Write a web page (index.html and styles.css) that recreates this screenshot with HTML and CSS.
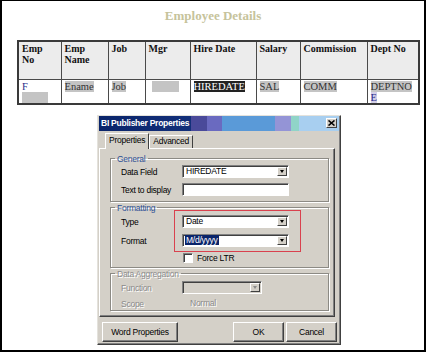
FILE: index.html
```html
<!DOCTYPE html>
<html lang="en">
<head>
  <meta charset="UTF-8" />
  <title>Employee Details</title>
  <link rel="stylesheet" href="styles.css">
</head>
<body>
  <div class="frame">
    <h1 class="title">Employee Details</h1>

    <table class="emp">
      <colgroup>
        <col class="w43"><col class="w47"><col class="w37"><col class="w45">
        <col class="w66"><col class="w44"><col class="w67"><col class="w52">
      </colgroup>
      <tr>
        <th>Emp<br>No</th>
        <th>Emp<br>Name</th>
        <th>Job</th>
        <th>Mgr</th>
        <th>Hire Date</th>
        <th>Salary</th>
        <th>Commission</th>
        <th>Dept No</th>
      </tr>
      <tr>
        <td><span class="fld-blue">F</span><br><span class="blk blk-empno"></span></td>
        <td><span class="fld">Ename</span></td>
        <td><span class="fld">Job</span></td>
        <td><span class="blk blk-mgr"></span></td>
        <td><span class="fld-dark">HIREDATE</span></td>
        <td><span class="fld">SAL</span></td>
        <td><span class="fld">COMM</span></td>
        <td><span class="fld">DEPTNO</span><br><span class="fld-end">E</span></td>
      </tr>
    </table>

    <div class="dlg">
      <div class="titlebar">
        <span>BI Publisher Properties</span>
        <span class="close">
          <svg width="7" height="6" viewBox="0 0 7 6"><path d="M0.5 0.5 L6.5 5.5 M6.5 0.5 L0.5 5.5" stroke="#000" stroke-width="1.6" fill="none"/></svg>
        </span>
      </div>

      <div class="tabs">
        <div class="tab active">Properties</div>
        <div class="tab">Advanced</div>
      </div>

      <div class="panel">
        <fieldset class="group">
          <legend>General</legend>
          <div class="rows">
            <div class="row">
              <label>Data Field</label>
              <div class="select"><span>HIREDATE</span><span class="arrow"></span></div>
            </div>
            <div class="row">
              <label>Text to display</label>
              <div class="input"></div>
            </div>
          </div>
        </fieldset>

        <fieldset class="group group-fmt">
          <legend>Formatting</legend>
          <div class="rows">
            <div class="mark"></div>
            <div class="row">
              <label>Type</label>
              <div class="select"><span>Date</span><span class="arrow"></span></div>
            </div>
            <div class="row">
              <label>Format</label>
              <div class="select"><span class="sel">M/d/yyyy</span><span class="arrow"></span></div>
            </div>
            <div class="row row-check">
              <span></span>
              <div class="check"><span class="box"></span>Force LTR</div>
            </div>
          </div>
        </fieldset>

        <fieldset class="group disabled">
          <legend>Data Aggregation</legend>
          <div class="rows">
            <div class="row">
              <label>Function</label>
              <div class="select select-off"><span></span><span class="arrow"></span></div>
            </div>
            <div class="row row-text">
              <label>Scope</label>
              <span class="value">Normal</span>
            </div>
          </div>
        </fieldset>
      </div>

      <div class="buttons">
        <button class="btn btn-word">Word Properties</button>
        <button class="btn btn-ok">OK</button>
        <button class="btn btn-cancel">Cancel</button>
      </div>
    </div>
  </div>
</body>
</html>
```

FILE: styles.css
```css
* {
  box-sizing: border-box;
}

body {
  margin: 0;
  background: #fff;
}

.frame {
  width: 426px;
  height: 352px;
  border: 2px solid #000;
  border-top-width: 1px;
  background: #fff;
  overflow: hidden;
}

.title {
  margin: 0;
  padding-top: 7px;
  font: bold 13px/15px "Liberation Serif", serif;
  color: #c6c39b;
  text-align: center;
}

/* tabela do relatorio */
.emp {
  margin: 17px 0 0 15px;
  width: 401px;
  border-collapse: collapse;
  table-layout: fixed;
  border: 2px solid #3a3a3a;
  font-family: "Liberation Serif", serif;
  color: #111;
}

.w43 { width: 43px; }
.w47 { width: 47px; }
.w37 { width: 37px; }
.w45 { width: 45px; }
.w66 { width: 66px; }
.w44 { width: 44px; }
.w67 { width: 67px; }
.w52 { width: 52px; }

.emp th,
.emp td {
  border: 1px solid #4a4a4a;
  text-align: left;
  vertical-align: top;
  padding: 1px 3px 0;
  overflow: hidden;
}

.emp th {
  height: 38px;
  background: #ececec;
  font-size: 10px;
  line-height: 11px;
  font-weight: bold;
}

.emp td {
  height: 22px;
  padding-top: 1px;
  font-size: 10.5px;
  line-height: 11px;
  white-space: nowrap;
}

.fld {
  background: #c4c4c4;
  color: #333;
}

.fld-blue {
  color: #2a2a8a;
}

.fld-end {
  background: #d4d0e8;
  color: #2a2a8a;
}

.fld-dark {
  background: #222;
  color: #fff;
}

.blk {
  display: inline-block;
  background: #c4c4c4;
  vertical-align: top;
}

.blk-empno {
  width: 26px;
  height: 11px;
}

.blk-mgr {
  width: 27px;
  height: 11px;
  margin-left: 3px;
}

/* janela de propriedades */
.dlg {
  width: 244px;
  margin: 10px 0 0 95px;
  padding: 0 1px 2px;
  background: #d4d0c8;
  border: 1px solid;
  border-color: #e4e2dc #404040 #404040 #e4e2dc;
  box-shadow: inset -1px -1px #808080;
  font: 8.5px/10px "Liberation Sans", sans-serif;
  letter-spacing: -0.25px;
  color: #000;
}

.titlebar {
  display: flex;
  align-items: center;
  height: 15px;
  padding-left: 2px;
  font-weight: bold;
  color: #fff;
  background: linear-gradient(90deg,
    #0a246a 0, #13307a 92px,
    #4a4a9a 92px, #4a4a9a 108px,
    #6a6ac0 108px, #6a6ac0 123px,
    #5a9ad8 123px, #5a9ad8 176px,
    #9494d6 176px, #9494d6 192px,
    #90d4c8 192px, #90d4c8 200px,
    #a8cff0 200px);
}

.close {
  display: flex;
  align-items: center;
  justify-content: center;
  width: 11px;
  height: 10px;
  margin: 0 2px 0 auto;
  background: #d4d0c8;
  border: 1px solid;
  border-color: #fff #404040 #404040 #fff;
}

.tabs {
  display: flex;
  align-items: flex-end;
  height: 15px;
  margin-top: 2px;
  padding-left: 6px;
  position: relative;
  z-index: 1;
}

.tab {
  height: 13px;
  padding: 0 3px;
  border: 1px solid;
  border-color: #fff #404040 transparent #fff;
  border-bottom: none;
  line-height: 11px;
  background: #d4d0c8;
  white-space: nowrap;
}

.tab.active {
  height: 16px;
  margin-bottom: -1px;
  line-height: 12px;
}

.panel {
  height: 169px;
  margin-right: 4px;
  padding-top: 5px;
  border: 1px solid;
  border-color: #fff #404040 #404040 #fff;
  box-shadow: inset -1px -1px #808080;
}

.group {
  margin: 0 5px 0 10px;
  padding: 0 0 5px 10px;
  border: 1px solid #8c8a84;
  box-shadow: inset 1px 1px #fff, 1px 1px #fff;
  min-width: 0;
}

.group + .group {
  margin-top: 1px;
}

.group legend {
  margin-left: -6px;
  padding: 0 2px;
  color: #2c4f94;
}

.rows {
  position: relative;
  display: flex;
  flex-direction: column;
  gap: 5px;
  padding-top: 1px;
}

.row {
  display: grid;
  grid-template-columns: 61px auto;
  align-items: center;
  height: 13px;
}

.row label {
  padding-top: 1px;
}

.select,
.input {
  display: flex;
  align-items: center;
  width: 107px;
  height: 13px;
  background: #fff;
  border: 1px solid;
  border-color: #808080 #fff #fff #808080;
  box-shadow: inset 1px 1px #404040;
}

.select span:first-child {
  flex: 1;
  padding-left: 3px;
}

.select span.sel {
  flex: none;
  margin-left: 2px;
  padding: 0 1px;
  background: #0a246a;
  color: #fff;
}

.select .sel + .arrow {
  margin-left: auto;
}

.arrow {
  position: relative;
  width: 10px;
  height: 9px;
  margin-right: 1px;
  background: #d4d0c8;
  border: 1px solid;
  border-color: #fff #404040 #404040 #fff;
}

.arrow::after {
  content: "";
  position: absolute;
  left: 2px;
  top: 2px;
  border-left: 2.5px solid transparent;
  border-right: 2.5px solid transparent;
  border-top: 3px solid #000;
}

/* marcacao vermelha sobre Type/Format */
.mark {
  position: absolute;
  left: 53px;
  top: -3px;
  width: 127px;
  height: 42px;
  border: 1px solid #d9414e;
  pointer-events: none;
}

.group-fmt {
  padding-bottom: 4px;
}

.group-fmt .rows {
  padding-top: 2px;
  gap: 6px;
}

.row-check {
  height: 10px;
}

.check {
  display: flex;
  align-items: center;
  gap: 4px;
  padding-left: 1px;
}

.box {
  width: 10px;
  height: 10px;
  background: #fff;
  border: 1px solid;
  border-color: #808080 #fff #fff #808080;
  box-shadow: inset 1px 1px #404040;
}

.disabled {
  padding-bottom: 2px;
}

.group.disabled {
  margin-top: 1px;
}

.disabled legend,
.disabled label,
.disabled .value {
  color: #8a8a8a;
  text-shadow: 1px 1px #fff;
}

.disabled .rows {
  padding-top: 2px;
  gap: 4px;
}

.select-off {
  width: 80px;
  background: #d4d0c8;
}

.select-off .arrow::after {
  border-top-color: #8a8a8a;
}

.row-text {
  height: 10px;
}

.value {
  padding-left: 8px;
}

.buttons {
  display: flex;
  gap: 2px;
  margin-top: 5px;
  padding: 0 2px 0 3px;
}

.btn {
  height: 20px;
  padding: 0;
  background: #d4d0c8;
  border: 1px solid;
  border-color: #fff #404040 #404040 #fff;
  box-shadow: inset -1px -1px #808080;
  font: 8.5px "Liberation Sans", sans-serif;
  letter-spacing: -0.25px;
  color: #000;
}

.btn-word {
  width: 76px;
  margin-right: auto;
}

.btn-ok {
  width: 51px;
}

.btn-cancel {
  width: 51px;
}
```
